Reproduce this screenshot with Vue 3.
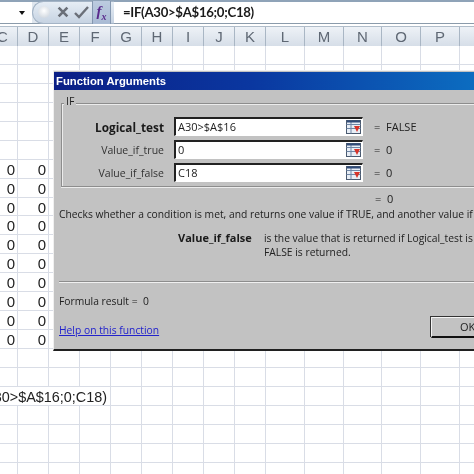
<script setup>
const colWidths = [18, 31, 31, 31, 31, 31, 31, 31, 31, 39, 39, 38, 39, 39, 39]
const letters = ['C', 'D', 'E', 'F', 'G', 'H', 'I', 'J', 'K', 'L', 'M', 'N', 'O', 'P', 'Q']
const columns = letters.map((name, i) => ({ name, width: colWidths[i] }))
const gridTemplate = colWidths.map((w) => w + 'px').join(' ')

const cells = []
let id = 0
for (let r = 0; r < 23; r++) {
  if (r === 18) {
    cells.push({ id: id++, text: '=IF(A30>$A$16;0;C18)', span: 4, kind: 'overflow' })
    for (let c = 4; c < colWidths.length; c++) cells.push({ id: id++, text: '', span: 1, kind: '' })
    continue
  }
  for (let c = 0; c < colWidths.length; c++) {
    const hasZero = r >= 6 && r <= 15 && c < 2
    cells.push({ id: id++, text: hasZero ? '0' : '', span: 1, kind: hasZero ? 'num' : '' })
  }
}

const args = [
  { label: 'Logical_test', value: 'A30>$A$16', result: 'FALSE', active: true },
  { label: 'Value_if_true', value: '0', result: '0', active: false },
  { label: 'Value_if_false', value: 'C18', result: '0', active: false }
]
</script>

<template>
  <div class="page">
    <div class="toptrim"></div>
    <div class="formula-bar">
      <div class="namebox"><span class="caret"></span></div>
      <div class="pill">
        <span class="knob"></span>
        <svg class="tool" viewBox="0 0 16 16" width="14" height="14">
          <path d="M3 3 L13 13 M13 3 L3 13" stroke="#6a6f78" stroke-width="3" fill="none" />
        </svg>
        <svg class="tool" viewBox="0 0 16 16" width="16" height="16">
          <path d="M2 9 L6 13 L15 3" stroke="#6a6f78" stroke-width="2.4" fill="none" />
        </svg>
        <span class="fx">f<sub>x</sub></span>
      </div>
      <div class="formula">=IF(A30&gt;$A$16;0;C18)</div>
    </div>
    <div class="headers">
      <div v-for="col in columns" :key="col.name" class="head" :style="{ width: col.width + 'px' }">
        <span :class="{ clipped: col.name === 'C' }">{{ col.name }}</span>
      </div>
    </div>
    <div class="sheet" :style="{ gridTemplateColumns: gridTemplate }">
      <div
        v-for="cell in cells"
        :key="cell.id"
        class="cell"
        :class="cell.kind"
        :style="{ gridColumn: 'span ' + cell.span }"
      >{{ cell.text }}</div>
    </div>

    <div class="dialog">
      <div class="title">Function Arguments</div>
      <div class="body">
        <div class="group">
          <span class="legend">IF</span>
          <div v-for="arg in args" :key="arg.label" class="arg">
            <span class="arg-label" :class="{ strong: arg.active }">{{ arg.label }}</span>
            <div class="input">
              <span>{{ arg.value }}</span>
              <svg class="refedit" viewBox="0 0 16 16" width="16" height="16">
                <rect x="0.5" y="1.5" width="14" height="13" fill="#e8eef6" stroke="#4a5a70" />
                <path d="M0.5 5.5H14.5M0.5 9.5H14.5M5 1.5V14.5" stroke="#6f86a6" fill="none" />
                <rect x="1" y="1.5" width="13" height="2" fill="#2f4a78" />
                <path d="M8 7 L14 7 L11 13 Z" fill="#d8342a" />
              </svg>
            </div>
            <span class="eq">=</span>
            <span class="res">{{ arg.result }}</span>
          </div>
        </div>
        <div class="total"><span class="eq">=</span><span class="res">0</span></div>
        <p class="desc">Checks whether a condition is met, and returns one value if TRUE, and another value if FALSE.</p>
        <div class="help-row">
          <span class="help-name">Value_if_false</span>
          <span class="help-text">is the value that is returned if Logical_test is FALSE. If omitted,<br />FALSE is returned.</span>
        </div>
        <div class="rule"></div>
        <div class="footer">
          <div class="footer-left">
            <div class="result">Formula result =&nbsp;&nbsp;0</div>
            <a class="link">Help on this function</a>
          </div>
          <div class="ok">OK</div>
        </div>
      </div>
    </div>
  </div>
</template>

<style scoped>
.page {
  position: relative;
  width: 474px;
  height: 474px;
  overflow: hidden;
  background: #fff;
  font-family: "Open Sans", "Liberation Sans", sans-serif;
  filter: blur(0.35px);
}
.toptrim {
  height: 2px;
  background: #8fa3b8;
}
.formula-bar {
  height: 21px;
  display: flex;
  align-items: center;
  background: #dfe6ee;
  border-bottom: 1px solid #8b9bab;
}
.namebox {
  width: 32px;
  height: 100%;
  background: #fff;
  display: flex;
  align-items: center;
  justify-content: flex-end;
  padding-right: 7px;
  box-sizing: border-box;
}
.caret {
  width: 0;
  height: 0;
  border-left: 3.5px solid transparent;
  border-right: 3.5px solid transparent;
  border-top: 4px solid #111;
}
.pill {
  width: 82px;
  height: 23px;
  margin-top: -1px;
  flex: none;
  display: flex;
  align-items: center;
  box-sizing: border-box;
  padding-left: 5px;
  background: linear-gradient(#e6edf5, #c6d3e2);
  border: 1px solid #a4b4c6;
  border-radius: 12px 0 0 12px;
  border-right: none;
}
.knob {
  width: 12px;
  height: 12px;
  border-radius: 50%;
  background: radial-gradient(circle at 50% 40%, #fff, #c5ced8);
  margin-right: 6px;
}
.tool {
  margin-right: 3px;
}
.fx {
  width: 19px;
  height: 23px;
  flex: none;
  box-sizing: border-box;
  background: linear-gradient(#bccbe0, #a9bbd4);
  border-left: 1px solid #8497b0;
  border-right: 1px solid #8497b0;
  color: #5a2a8c;
  font: italic bold 15px/21px "Liberation Serif", serif;
  text-align: center;
}
.fx sub {
  font-size: 10px;
  line-height: 0;
}
.formula {
  flex: 1;
  height: 100%;
  background: #fff;
  padding-left: 9px;
  font-family: Lato, "Open Sans", sans-serif;
  font-size: 13.2px;
  letter-spacing: -0.3px;
  font-weight: 700;
  line-height: 20px;
  color: #1a1a1a;
}
.headers {
  display: flex;
  height: 20px;
  margin-top: 2px;
  background: linear-gradient(#eef2f7, #d6dee8);
  border-top: 1px solid #b0bdca;
  box-sizing: border-box;
  width: 490px;
}
.head {
  flex: none;
  box-sizing: border-box;
  border-right: 1px solid #a9b6c4;
  font: 15px/19px "Liberation Sans", sans-serif;
  color: #5f6874;
  text-align: center;
  overflow: hidden;
}
.head .clipped {
  display: block;
  width: 31px;
  margin-left: -13px;
}
.sheet {
  display: grid;
  grid-auto-rows: 18.95px;
  width: 490px;
}
.cell {
  box-sizing: border-box;
  border-right: 1.5px solid #d9dde6;
  border-bottom: 1.5px solid #d9dde6;
  font: 15px/20px "Liberation Sans", sans-serif;
  color: #222;
  white-space: nowrap;
  overflow: hidden;
}
.num {
  text-align: right;
  padding-right: 2px;
}
.overflow {
  display: flex;
  justify-content: flex-end;
  padding-right: 3px;
  font-size: 14.4px;
}
.dialog {
  position: absolute;
  left: 53px;
  top: 70px;
  width: 440px;
  height: 281px;
  box-sizing: border-box;
  background: #c2c2c2;
  border-left: 1px solid #f0f0f0;
  border-top: 1px solid #f0f0f0;
  border-bottom: 2px solid #202020;
  font-size: 10.3px;
  color: #222;
}
.title {
  height: 18px;
  margin: 1px 0 0 0;
  padding-left: 2px;
  background: linear-gradient(90deg, #0b1f86 0%, #0a37a0 45%, #0c6cc0 95%);
  color: #fff;
  font: bold 11.3px/18px "Liberation Sans", sans-serif;
}
.body {
  padding: 13px 0 0 5px;
}
.group {
  position: relative;
  height: 84px;
  margin-left: 2px;
  box-sizing: border-box;
  padding: 13px 0 0 0;
  border: 1px solid #8d8d8d;
  border-right: none;
  box-shadow: inset 1px 1px 0 #ececec, 0 1px 0 #ececec;
  display: flex;
  flex-direction: column;
  gap: 4px;
}
.legend {
  position: absolute;
  left: 2px;
  top: -9px;
  padding: 0 2px;
  background: #c2c2c2;
  font-size: 10.5px;
  line-height: 13px;
}
.arg {
  display: flex;
  align-items: center;
  height: 19px;
}
.arg-label {
  width: 102px;
  text-align: right;
  font-size: 10.5px;
  color: #333;
}
.strong {
  font-size: 11.8px;
  font-weight: 700;
  color: #1a1a1a;
}
.input {
  margin-left: 10px;
  width: 189px;
  height: 19px;
  box-sizing: border-box;
  display: flex;
  align-items: center;
  justify-content: space-between;
  background: #fff;
  border: 1px solid #fff;
  border-top: 2px solid #222;
  border-left: 2px solid #222;
  padding-left: 2px;
  font-size: 11px;
  line-height: 14px;
}
.refedit {
  flex: none;
}
.eq {
  margin-left: 11px;
  width: 12px;
  font-size: 11px;
}
.res {
  font-size: 11px;
}
.total {
  display: flex;
  align-items: center;
  height: 18px;
  padding-left: 305px;
  margin-top: 2px;
}
.desc {
  margin: 0;
  font-size: 10.3px;
  line-height: 15px;
  white-space: nowrap;
}
.help-row {
  display: flex;
  height: 47px;
  margin-top: 9px;
  padding-left: 119px;
  line-height: 14px;
}
.help-name {
  width: 78px;
  flex: none;
  font-size: 11px;
  font-weight: 700;
  color: #1a1a1a;
}
.help-text {
  margin-left: 8px;
  white-space: nowrap;
  font-size: 10.3px;
}
.rule {
  height: 1px;
  background: #8d8d8d;
  border-bottom: 1px solid #f0f0f0;
  margin-top: 3px;
}
.footer {
  display: flex;
  padding-top: 11px;
}
.footer-left {
  flex: none;
  width: 372px;
  display: flex;
  flex-direction: column;
  gap: 14px;
  line-height: 15px;
  white-space: nowrap;
}
.link {
  color: #2222cc;
  text-decoration: underline;
}
.ok {
  width: 70px;
  height: 21px;
  margin-top: 23px;
  flex: none;
  box-sizing: border-box;
  background: #c2c2c2;
  border: 1px solid #f4f4f4;
  border-bottom: 2px solid #111;
  box-shadow: -1px -1px 0 #333;
  padding-left: 28px;
  font-size: 11px;
  line-height: 18px;
}
</style>

<style>
html,
body {
  margin: 0;
  background: #fff;
}
</style>
